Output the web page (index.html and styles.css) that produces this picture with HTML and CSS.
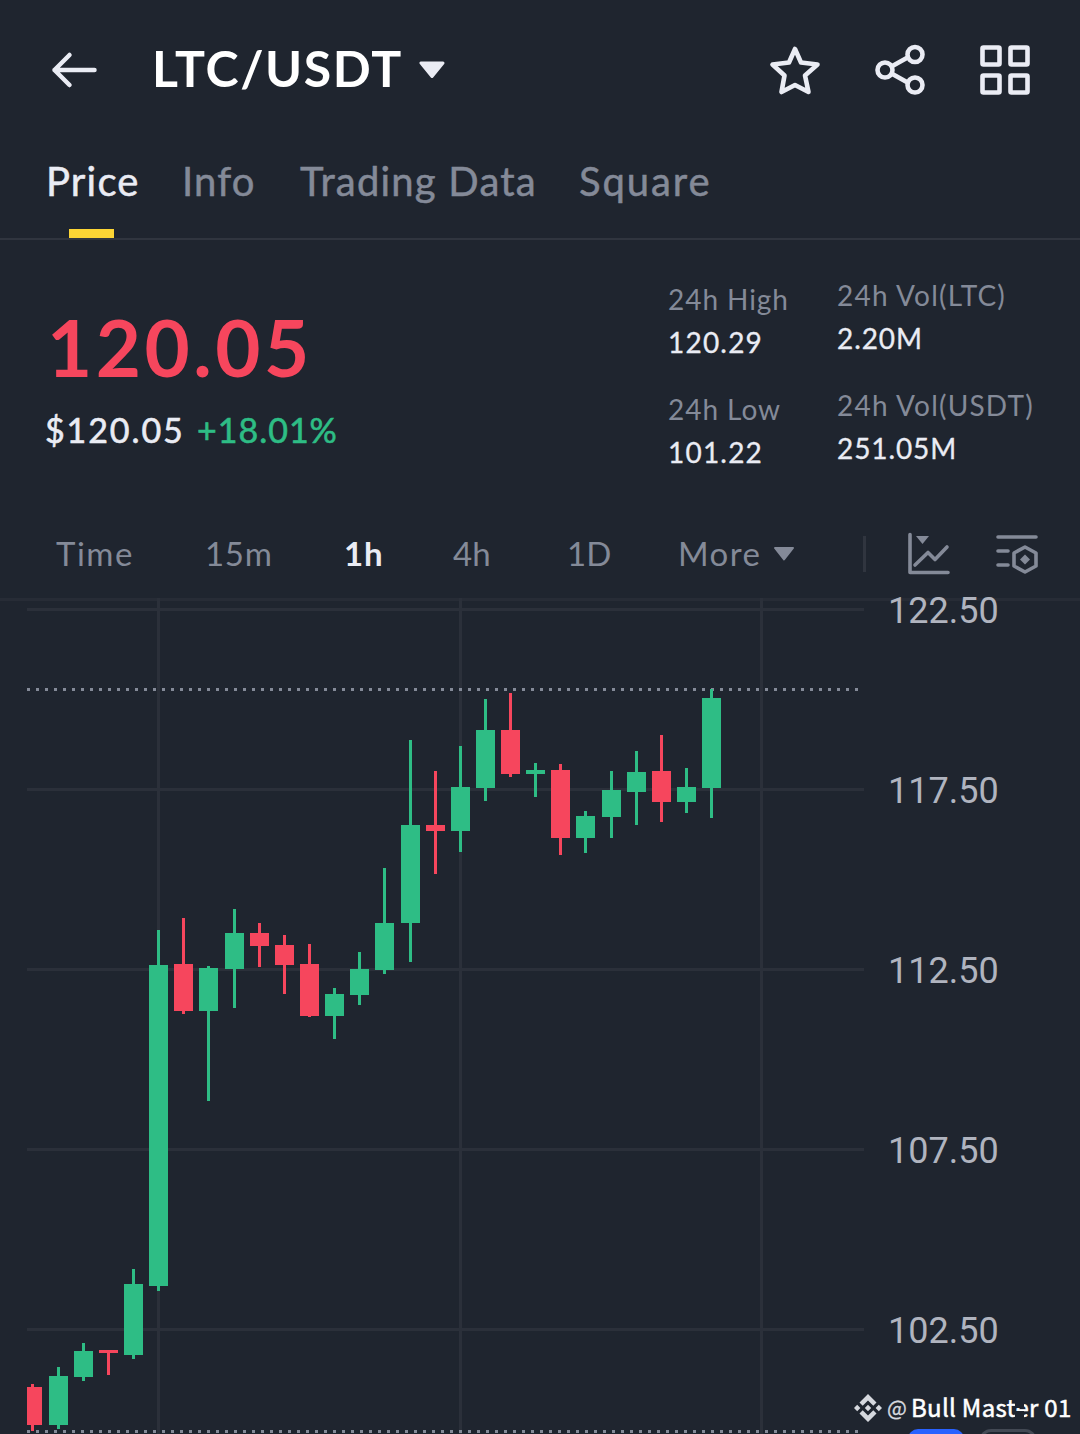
FILE: index.html
```html
<!DOCTYPE html>
<html lang="en">
<head>
    <meta charset="UTF-8">
    <title>LTC/USDT</title>
    <link rel="stylesheet" href="styles.css">
</head>
<body>
<header class="header">
    <svg class="back" width="48" height="40" viewBox="0 0 48 40">
        <path d="M19.500 5L4.500 20l15 15M4.500 20h40"/>
    </svg>
    <h1 class="pair">LTC/USDT</h1>
    <svg class="caret" width="26" height="18" viewBox="0 0 26 18">
        <path d="M2 2h22L13 15.500z"/>
    </svg>
    <div class="actions">
        <svg width="52" height="52" viewBox="0 0 52 52">
            <path d="M26 5l6 13.500 16.500 2-12.500 11 3.500 16.500L26 41l-13.500 7L15.500 31.500 3.500 20.500l16.500-2z"/>
        </svg>
        <svg width="52" height="52" viewBox="0 0 52 52">
            <circle cx="11" cy="26" r="7.500"/>
            <circle cx="41" cy="10.500" r="7.500"/>
            <circle cx="41" cy="41" r="7.500"/>
            <path d="M17.500 22.500l17-9.500M17.500 29.500l17 9.500"/>
        </svg>
        <svg width="52" height="52" viewBox="0 0 52 52">
            <rect x="3.500" y="3.500" width="17" height="17" rx="1"/>
            <rect x="31.500" y="3.500" width="17" height="17" rx="1"/>
            <rect x="3.500" y="31.500" width="17" height="17" rx="1"/>
            <rect x="31.500" y="31.500" width="17" height="17" rx="1"/>
        </svg>
    </div>
</header>

<nav class="tabs">
    <a class="tab price active">Price</a>
    <a class="tab info">Info</a>
    <a class="tab trading">Trading Data</a>
    <a class="tab square">Square</a>
</nav>

<section class="ticker">
    <div class="last">
        <div class="lastPrice">120.05</div>
        <div class="converted"><span class="usd">$120.05</span><span class="change">+18.01%</span></div>
    </div>
    <dl class="stats statsPrice">
        <dt>24h High</dt>
        <dd>120.29</dd>
        <dt>24h Low</dt>
        <dd>101.22</dd>
    </dl>
    <dl class="stats statsVolume">
        <dt>24h Vol(LTC)</dt>
        <dd>2.20M</dd>
        <dt>24h Vol(USDT)</dt>
        <dd>251.05M</dd>
    </dl>
</section>

<div class="toolbar">
    <span class="interval time">Time</span>
    <span class="interval m15">15m</span>
    <span class="interval h1 selected">1h</span>
    <span class="interval h4">4h</span>
    <span class="interval d1">1D</span>
    <span class="interval more">More</span>
    <svg class="moreCaret" width="22" height="16" viewBox="0 0 22 16">
        <path d="M2 2h18l-9 11.500z"/>
    </svg>
    <i class="divider"></i>
    <svg class="tool" width="44" height="44" viewBox="0 0 44 44">
        <path d="M3 2.500v38h38M8 33l13-12.500 7 7 12-12.500"/>
        <path class="solid" d="M9 4h13l-6.500 8z"/>
    </svg>
    <svg class="tool settings" width="44" height="44" viewBox="0 0 44 44">
        <path d="M3 5h38M3 19h10M3 33h10M30 15l11 6v13l-11 6-11-6V21z"/>
        <path class="solid" d="M30 22.500l5 5-5 5-5-5z"/>
    </svg>
</div>

<main class="chart">
    <svg class="plot" width="1080" height="836" viewBox="0 598 1080 836">
        <path class="grid" d="M27 609.500H864M27 789.500H864M27 969.500H864M27 1149.500H864M27 1329.500H864"/>
        <path class="grid" d="M158.500 598V1434M460.500 598V1434M761.500 598V1434"/>
        <path class="extreme" d="M27 689.500H860M27 1431.500H860"/>

        <!-- wicks -->
        <path class="wick up" d="M58.500 1367V1429M83.500 1343V1381M133.500 1269V1359M158.500 930V1291M208.500 966V1101M234.500 909V1008M334.500 988V1039M359.500 952V1005M384.500 868V974M410.500 740V962M460.500 746V852M485.500 699V801M535.500 763V797M585.500 811V853M611.500 771V838M636.500 751V825M686.500 768V813M711.500 689V818"/>
        <path class="wick down" d="M32.500 1384V1431M108.500 1350V1375M183.500 918V1014M259.500 923V967M284.500 935V994M309.500 944V1017M435.500 771V874M510.500 693V777M560.500 764V855M661.500 735V822"/>

        <!-- bodies -->
        <g class="body up">
            <rect x="49" y="1376" width="19" height="49"/>
            <rect x="74" y="1351" width="19" height="26"/>
            <rect x="124" y="1284" width="19" height="71"/>
            <rect x="149" y="965" width="19" height="321"/>
            <rect x="199" y="968" width="19" height="43"/>
            <rect x="225" y="933" width="19" height="36"/>
            <rect x="325" y="994" width="19" height="22"/>
            <rect x="350" y="969" width="19" height="26"/>
            <rect x="375" y="923" width="19" height="47"/>
            <rect x="401" y="825" width="19" height="98"/>
            <rect x="451" y="787" width="19" height="44"/>
            <rect x="476" y="730" width="19" height="58"/>
            <rect x="526" y="770" width="19" height="4"/>
            <rect x="576" y="816" width="19" height="22"/>
            <rect x="602" y="790" width="19" height="27"/>
            <rect x="627" y="772" width="19" height="20"/>
            <rect x="677" y="787" width="19" height="15"/>
            <rect x="702" y="698" width="19" height="90"/>
        </g>
        <g class="body down">
            <rect x="27" y="1387" width="15" height="38"/>
            <rect x="99" y="1350" width="19" height="3"/>
            <rect x="174" y="964" width="19" height="47"/>
            <rect x="250" y="933" width="19" height="13"/>
            <rect x="275" y="945" width="19" height="20"/>
            <rect x="300" y="964" width="19" height="52"/>
            <rect x="426" y="825" width="19" height="6"/>
            <rect x="501" y="730" width="19" height="44"/>
            <rect x="551" y="770" width="19" height="68"/>
            <rect x="652" y="771" width="19" height="31"/>
        </g>

        <g class="axis">
            <text x="888" y="623">122.50</text>
            <text x="888" y="803">117.50</text>
            <text x="888" y="983">112.50</text>
            <text x="888" y="1163">107.50</text>
            <text x="888" y="1343">102.50</text>
        </g>

        <rect class="buttonBlue" x="908" y="1429" width="56" height="30" rx="10"/>
        <rect class="buttonOutline" x="981" y="1430.500" width="54" height="30" rx="10"/>
    </svg>
    <div class="watermark">
        <svg width="28" height="28" viewBox="0 0 28 28">
            <path d="M14 0l8.500 8.500-3.200 3.200L14 6.400l-5.300 5.300-3.200-3.200zM14 28l8.500-8.500-3.200-3.200-5.300 5.300-5.300-5.300-3.200 3.200zM3.200 10.800L6.400 14l-3.200 3.200L0 14zM24.800 10.800L28 14l-3.200 3.200-3.200-3.200zM14 10.800l3.200 3.200-3.200 3.200-3.200-3.200z"/>
        </svg>
        <span class="at">@</span>
        <span class="author">Bull Mast<span class="worn">e</span>r 01</span>
    </div>
</main>
</body>
</html>
```
FILE: styles.css
```css
* {
    box-sizing: border-box;
}

body {
    margin: 0;
    width: 1080px;
    height: 1434px;
    overflow: hidden;
    background: #1f252f;
    color: #eaecf4;
    font-family: Lato, "Open Sans", sans-serif;
}

svg {
    display: block;
    flex: none;
    fill: none;
}

.header {
    display: flex;
    align-items: center;
    height: 140px;
    padding: 0 49px 0 50px;
}

.back {
    stroke: #eaecf4;
    stroke-width: 4.5;
    stroke-linecap: round;
    stroke-linejoin: round;
}

.pair {
    width: 250px;
    margin: 0 17px 4px 54px;
    color: #fff;
    font-size: 50px;
    line-height: 60px;
    font-weight: bold;
    letter-spacing: 1.6px;
    white-space: nowrap;
}

.caret {
    fill: #eaecf4;
    stroke: #eaecf4;
    stroke-width: 3;
    stroke-linejoin: round;
}

.actions {
    display: flex;
    gap: 53px;
    margin-left: auto;
    stroke: #eaecf4;
    stroke-width: 4.6;
    stroke-linejoin: round;
}

.tabs {
    display: flex;
    height: 100px;
    padding-left: 46px;
    border-bottom: 2px solid #30353f;
    color: #848a98;
    font-size: 40px;
    letter-spacing: 1.2px;
    line-height: 83px;
    white-space: nowrap;
    -webkit-text-stroke: 0.5px;
}

.tab {
    flex: none;
    position: relative;
}

.price { width: 136px; }
.info { width: 118px; }
.trading { width: 279px; }
.square { letter-spacing: 1.9px; }

.tab.active {
    color: #eaecf4;
}

.tab.active::after {
    content: "";
    position: absolute;
    left: 23px;
    bottom: 0;
    width: 45px;
    height: 9px;
    background: #fcd535;
}

.ticker {
    display: flex;
    height: 270px;
    padding-left: 46px;
}

.last {
    width: 622px;
    padding-top: 60px;
}

.lastPrice {
    padding-left: 1px;
    color: #f6465d;
    font-size: 78px;
    line-height: 94px;
    font-weight: bold;
    letter-spacing: 3.5px;
}

.converted {
    display: flex;
    padding-top: 15px;
    font-size: 34px;
    line-height: 42px;
    -webkit-text-stroke: 0.6px;
}

.usd {
    width: 152px;
    margin-left: -1px;
    letter-spacing: 1.9px;
}

.change {
    color: #2ebd85;
    letter-spacing: 1px;
}

.stats {
    margin: 0;
    font-size: 28px;
    white-space: nowrap;
}

.stats dt {
    height: 43px;
    line-height: 34px;
    color: #848a98;
    letter-spacing: 0.95px;
}

.stats dd {
    height: 67px;
    margin: 0;
    line-height: 34px;
    letter-spacing: 1.2px;
    -webkit-text-stroke: 0.3px;
}

.statsPrice {
    width: 169px;
    padding-top: 42px;
}

.statsVolume {
    padding-top: 38px;
}

.statsVolume dt {
    letter-spacing: 1.2px;
}

.statsVolume dd {
    letter-spacing: 0.9px;
}

.toolbar {
    display: flex;
    align-items: center;
    height: 91px;
    padding-left: 56px;
    border-bottom: 3px solid #272c36;
    color: #848a98;
    font-size: 33px;
    white-space: nowrap;
}

.interval {
    flex: none;
    padding-bottom: 2px;
}

.time {
    width: 149px;
    letter-spacing: 1.5px;
}

.m15 {
    width: 139px;
    letter-spacing: 0.7px;
}

.h1 { width: 109px; }
.h4 { width: 114px; }
.d1 { width: 111px; }

.more {
    width: 95px;
    letter-spacing: 1.4px;
}

.selected {
    color: #eaecf4;
    font-weight: bold;
    letter-spacing: 0.8px;
}

.moreCaret {
    fill: #848a98;
    stroke: #848a98;
    stroke-width: 2;
    stroke-linejoin: round;
}

.divider {
    width: 3px;
    height: 36px;
    margin: 0 41px 0 68px;
    background: #30353f;
}

.tool {
    stroke: #848a98;
    stroke-width: 3.6;
    stroke-linecap: round;
    stroke-linejoin: round;
}

.tool .solid {
    fill: #848a98;
    stroke: none;
}

.settings {
    margin-left: 44px;
}

.chart {
    position: relative;
    height: 836px;
    margin-top: -3px;
}

.plot {
    overflow: visible;
}

.grid {
    stroke: #2b303a;
    stroke-width: 3;
}

.extreme {
    stroke: #848a98;
    stroke-width: 3;
    stroke-dasharray: 3 6;
}

.wick {
    stroke-width: 3;
}

.wick.up { stroke: #2ebd85; }
.wick.down { stroke: #f6465d; }
.body.up { fill: #2ebd85; }
.body.down { fill: #f6465d; }

.axis {
    fill: #b0b4bf;
    font-family: Roboto, sans-serif;
    font-size: 36px;
}

.buttonBlue {
    fill: #2962ff;
}

.buttonOutline {
    stroke: #434954;
    stroke-width: 3;
}

/* author tag laid over the bottom of the chart */
.watermark {
    position: absolute;
    right: 8px;
    bottom: 8px;
    display: flex;
    align-items: center;
    height: 36px;
    color: #fff;
    font-family: "Noto Sans CJK SC", sans-serif;
    font-size: 24px;
    line-height: 34px;
    white-space: nowrap;
}

.watermark svg {
    margin-right: 5px;
    fill: #d5d8de;
}

.at {
    width: 24px;
    padding-bottom: 2px;
    color: #d5d8de;
    font-size: 21px;
    -webkit-text-stroke: 0.3px;
}

.author {
    width: 161px;
    padding-bottom: 2px;
    letter-spacing: 0.3px;
    -webkit-text-stroke: 0.5px;
}

.worn {
    position: relative;
}

/* rubbed-out left side of the letter */
.worn::after {
    content: "";
    position: absolute;
    left: 0;
    top: 10px;
    width: 9px;
    height: 20px;
    background: linear-gradient(#1f252f 45%, transparent 45%, transparent 58%, #1f252f 58%);
}
```
